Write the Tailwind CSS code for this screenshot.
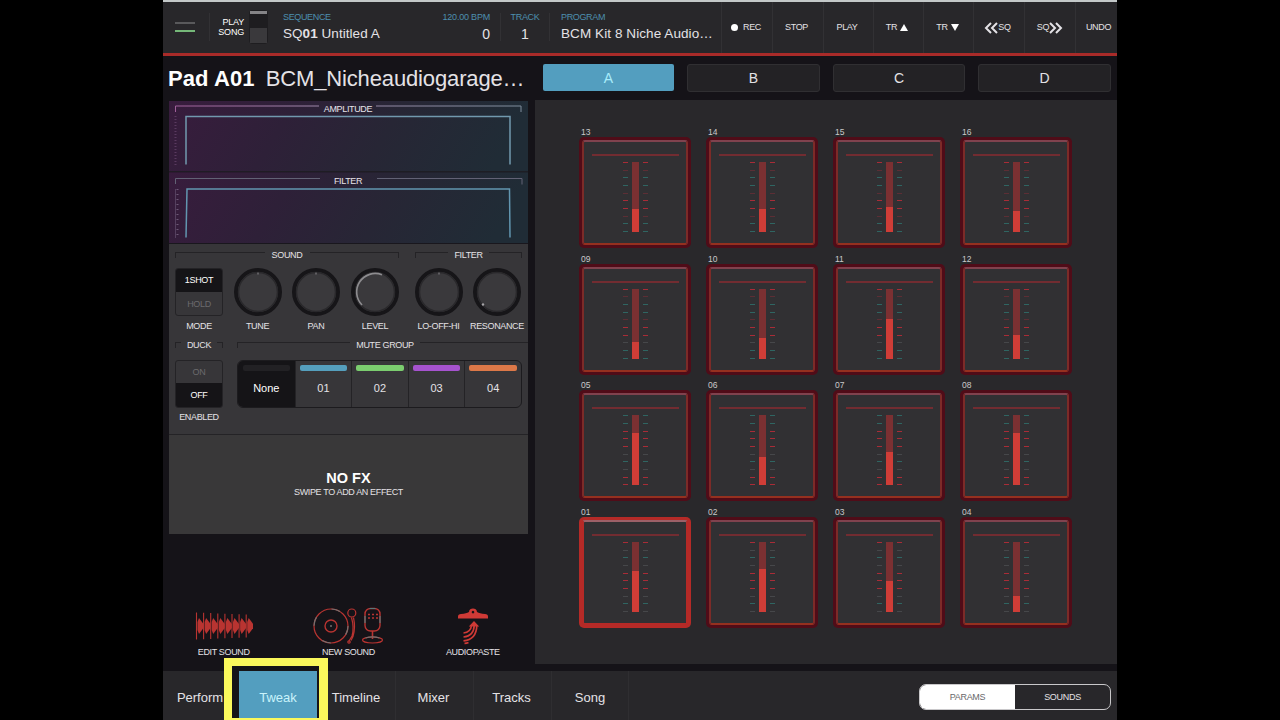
<!DOCTYPE html>
<html lang="en">
<head>
    <meta charset="UTF-8">
    <meta name="viewport" content="width=device-width, initial-scale=1.0">
    <title>Pad Tweak</title>
    <script src="https://cdn.jsdelivr.net/npm/@tailwindcss/browser@4"></script>
</head>
<body class="bg-black overflow-hidden">
<div class="relative ml-[163px] w-[954px] h-[720px] flex flex-col overflow-hidden bg-[#151318] text-[#e4e2e6] font-['Liberation_Sans',Arial,sans-serif] text-[9px] leading-none tracking-[-0.35px] whitespace-nowrap">

    <!-- Transport bar -->
    <header class="h-[56px] shrink-0 flex bg-[#28272a] border-t-2 border-t-[#c3c8c8] border-b-3 border-b-[#a92b29]">
        <div class="w-[46px] flex flex-col justify-center items-center gap-[6px] pr-[2px] pb-[2px]">
            <div class="w-5 h-[2px] bg-[#59595b]"></div>
            <div class="w-5 h-[2px] bg-[#75b778]"></div>
        </div>
        <div class="w-[65px] flex items-center justify-end gap-[5px] pr-[6px] pb-[2px] relative">
            <div class="text-right leading-[10px] tracking-[-0.2px] font-medium text-white">PLAY<br>SONG</div>
            <div class="w-[19px] h-[34px] p-px bg-[#1e1d20] rounded-sm flex flex-col justify-between">
                <div class="h-[3px] bg-[#858487]"></div>
                <div class="h-[15px] bg-[#3a393c]"></div>
            </div>
            <div class="absolute left-0 top-[11px] h-7 w-px bg-[#323134]"></div>
        </div>
        <div class="w-[226px] flex justify-between pt-[11px] pl-[9px] pr-[10px]">
            <div>
                <div class="text-[#4d8fae]">SEQUENCE</div>
                <div class="mt-[5px] text-[13.5px] tracking-[0.05px]">SQ<b>01</b> Untitled A</div>
            </div>
            <div class="text-right">
                <div class="text-[#4d8fae] tracking-[-0.2px]">120.00 BPM</div>
                <div class="mt-[5px] text-[14px] tracking-normal">0</div>
            </div>
        </div>
        <div class="w-[50px] text-center pt-[11px] relative">
            <div class="text-[#4d8fae]">TRACK</div>
            <div class="mt-[5px] text-[14px] tracking-normal">1</div>
            <div class="absolute left-0 top-[11px] h-7 w-px bg-[#323134]"></div>
            <div class="absolute right-0 top-[11px] h-7 w-px bg-[#323134]"></div>
        </div>
        <div class="w-[171px] pt-[11px] pl-[11px]">
            <div class="text-[#4d8fae]">PROGRAM</div>
            <div class="mt-[5px] text-[13.5px] tracking-[0.08px]">BCM Kit 8 Niche Audio…</div>
        </div>
        <div class="w-[51px] border-l border-[#323134] flex items-center justify-center gap-[5px] pr-[2px]"><span class="size-[7px] rounded-full bg-white"></span>REC</div>
        <div class="w-[51px] border-l border-[#323134] flex items-center justify-center pr-[3px]">STOP</div>
        <div class="w-[50px] border-l border-[#323134] flex items-center justify-center pr-[3px]">PLAY</div>
        <div class="w-[50px] border-l border-[#323134] flex items-center justify-center gap-[3px] pr-[3px]">TR
            <svg class="w-2 h-[7px]" viewBox="0 0 8 7" fill="#fff"><path d="M4 0L8 7H0z"/></svg>
        </div>
        <div class="w-[50px] border-l border-[#323134] flex items-center justify-center gap-[3px] pr-[2px]">TR
            <svg class="w-2 h-[7px]" viewBox="0 0 8 7" fill="#fff"><path d="M0 0h8L4 7z"/></svg>
        </div>
        <div class="w-[51px] border-l border-[#323134] flex items-center justify-center pr-[3px]">
            <svg class="w-[14px] h-3" viewBox="0 0 14 12" fill="none" stroke="#e4e2e6" stroke-width="2"><path d="M7 1L2 6l5 5M13 1L8 6l5 5"/></svg>SQ
        </div>
        <div class="w-[51px] border-l border-[#323134] flex items-center justify-center">SQ
            <svg class="w-[14px] h-3" viewBox="0 0 14 12" fill="none" stroke="#e4e2e6" stroke-width="2"><path d="M1 1l5 5-5 5M7 1l5 5-5 5"/></svg>
        </div>
        <div class="flex-1 border-l border-[#323134] flex items-center justify-center pl-[4px]">UNDO</div>
    </header>

    <!-- Pad name and banks -->
    <div class="h-[44px] shrink-0 flex items-center pl-[5px] tracking-normal">
        <div class="w-[375px] flex gap-[11px] pt-[2px] text-[22px]">
            <b class="text-white tracking-[0.1px]">Pad A01</b>
            <span class="tracking-[-0.14px]">BCM_Nicheaudiogarage…</span>
        </div>
        <div class="flex gap-[13px] text-[14px]">
            <div class="w-[131px] h-[27px] rounded-xs flex items-center justify-center bg-[#539ebf] text-[#a8ecfa]">A</div>
            <div class="w-[133px] h-[28px] rounded-[3px] flex items-center justify-center bg-[#232225] border border-[#302f32]">B</div>
            <div class="w-[132px] h-[28px] rounded-[3px] flex items-center justify-center bg-[#232225] border border-[#302f32]">C</div>
            <div class="w-[133px] h-[28px] rounded-[3px] flex items-center justify-center bg-[#232225] border border-[#302f32]">D</div>
        </div>
    </div>

    <main class="h-[564px] shrink-0 flex">
        <section class="w-[372px] flex flex-col">
            <div class="ml-[6px] w-[359px] h-[433px] mt-px bg-[#373639] flex flex-col">

                <!-- Envelopes -->
                <svg class="w-[359px] h-[143px] block shrink-0" viewBox="169 101 359 143">
                    <defs>
                        <linearGradient id="env" x1="0" y1="0" x2="1" y2="0.12">
                            <stop offset="0" stop-color="#381c3d"/>
                            <stop offset="0.35" stop-color="#2e2038"/>
                            <stop offset="0.65" stop-color="#272635"/>
                            <stop offset="1" stop-color="#202c36"/>
                        </linearGradient>
                        <linearGradient id="rule" gradientUnits="userSpaceOnUse" x1="175" y1="0" x2="521" y2="0">
                            <stop offset="0" stop-color="#a0609a"/>
                            <stop offset="0.4" stop-color="#9d86a8"/>
                            <stop offset="1" stop-color="#7e8d9c"/>
                        </linearGradient>
                    </defs>
                    <rect x="169" y="101" width="359" height="70.5" fill="url(#env)"/>
                    <rect x="169" y="172" width="359" height="71" fill="url(#env)"/>
                    <path d="M169 171.8h359M169 243.5h359" stroke="#19171d"/>
                    <path d="M175.5 112v-6H319M376 106h145v6" fill="none" stroke="url(#rule)"/>
                    <path d="M175.5 184v-5.500H320M377 178.500h145v6" fill="none" stroke="#626275"/>
                    <path d="M175.500 116v50" stroke="#5a3a60" stroke-width="2" stroke-dasharray="1 2"/>
                    <path d="M175.500 189v49" stroke="#55405f"/>
                    <path d="M177.500 189v49" stroke="#6d5876" stroke-width="2" stroke-dasharray="1 4"/>
                    <path d="M186 164.500v-48h324v48" fill="none" stroke="#7199ae" stroke-width="1.500"/>
                    <path d="M186 237.500l1-48.500h322.500l.5 48.500" fill="none" stroke="#6296b0" stroke-width="1.500"/>
                    <g fill="#e8e4ea" font-size="9" text-anchor="middle" letter-spacing="-0.35">
                        <text x="348" y="111.500">AMPLITUDE</text>
                        <text x="348" y="184">FILTER</text>
                    </g>
                </svg>

                <!-- Sound controls -->
                <div class="h-[95px] shrink-0 pt-[5px] pl-[6px]">
                    <div class="flex gap-4 h-3 items-center">
                        <div class="w-[224px] flex items-center">
                            <div class="flex-1 h-[6px] border-t border-l border-[#242326]"></div>
                            <span class="w-[45px] text-center">SOUND</span>
                            <div class="flex-1 h-[6px] border-t border-r border-[#242326]"></div>
                        </div>
                        <div class="w-[107px] flex items-center">
                            <div class="flex-1 h-[6px] border-t border-l border-[#242326]"></div>
                            <span class="w-[41px] text-center">FILTER</span>
                            <div class="flex-1 h-[6px] border-t border-r border-[#242326]"></div>
                        </div>
                    </div>
                    <div class="mt-[7px] flex">
                        <div class="w-12 flex flex-col items-center gap-[6px]">
                            <div class="w-12 h-12 flex flex-col border border-[#242326] rounded-[3px] overflow-hidden text-center">
                                <div class="h-6 leading-[23px] bg-[#151417] text-white">1SHOT</div>
                                <div class="flex-1 leading-[24px] text-[#6b6a6d]">HOLD</div>
                            </div>
                            MODE
                        </div>
                        <div class="ml-[10.5px] w-12 flex flex-col items-center gap-[6px]">
                            <svg class="size-12" viewBox="-24 -24 48 48"><circle r="22" fill="#3a393c" stroke="#161518" stroke-width="4"/><circle r="19.500" fill="none" stroke="#29282b" stroke-width="1.500"/><path d="M0-19.500v2" stroke="#8a898c"/></svg>
                            TUNE
                        </div>
                        <div class="ml-[10.5px] w-12 flex flex-col items-center gap-[6px]">
                            <svg class="size-12" viewBox="-24 -24 48 48"><circle r="22" fill="#3a393c" stroke="#161518" stroke-width="4"/><circle r="19.500" fill="none" stroke="#29282b" stroke-width="1.500"/><path d="M0-19.500v2" stroke="#8a898c"/></svg>
                            PAN
                        </div>
                        <div class="ml-[11px] w-12 flex flex-col items-center gap-[6px]">
                            <svg class="size-12" viewBox="-24 -24 48 48"><circle r="22" fill="#3a393c" stroke="#161518" stroke-width="4"/><circle r="19.500" fill="none" stroke="#29282b" stroke-width="1.500"/><path d="M-13 13A18.500 18.500 0 0 1 7-17.200" fill="none" stroke="#8d8c8f" stroke-width="1.700"/></svg>
                            LEVEL
                        </div>
                        <div class="ml-[15.5px] w-12 flex flex-col items-center gap-[6px]">
                            <svg class="size-12" viewBox="-24 -24 48 48"><circle r="22" fill="#3a393c" stroke="#161518" stroke-width="4"/><circle r="19.500" fill="none" stroke="#29282b" stroke-width="1.500"/><path d="M0-19.500v2" stroke="#8a898c"/></svg>
                            LO-OFF-HI
                        </div>
                        <div class="ml-[10.5px] w-12 flex flex-col items-center gap-[6px]">
                            <svg class="size-12" viewBox="-24 -24 48 48"><circle r="22" fill="#3a393c" stroke="#161518" stroke-width="4"/><circle r="19.500" fill="none" stroke="#29282b" stroke-width="1.500"/><circle cx="-14" cy="12.500" r="1.200" fill="#a5a4a7"/></svg>
                            RESONANCE
                        </div>
                    </div>
                </div>

                <!-- Duck and mute group -->
                <div class="h-[96px] shrink-0 pl-[6px] flex gap-[14px] border-b border-[#242326]">
                    <div class="w-12 flex flex-col items-center">
                        <div class="w-12 h-3 flex items-center">
                            <div class="w-[6px] h-[6px] border-t border-l border-[#242326]"></div>
                            <span class="flex-1 text-center">DUCK</span>
                            <div class="w-[6px] h-[6px] border-t border-r border-[#242326]"></div>
                        </div>
                        <div class="mt-[9px] mb-[5px] w-12 h-12 flex flex-col border border-[#242326] rounded-[3px] overflow-hidden text-center">
                            <div class="h-[23px] leading-[22px] text-[#6b6a6d]">ON</div>
                            <div class="flex-1 leading-[24px] bg-[#151417] text-white">OFF</div>
                        </div>
                        ENABLED
                    </div>
                    <div class="flex-1">
                        <div class="h-3 flex items-center">
                            <div class="w-[113px] h-[6px] border-t border-l border-[#242326]"></div>
                            <span class="w-[70px] text-center">MUTE GROUP</span>
                            <div class="flex-1 h-[6px] border-t border-[#242326]"></div>
                        </div>
                        <div class="mt-[9px] w-[285px] h-12 grid grid-cols-5 rounded-[6px] border border-[#1c1b1e] overflow-hidden text-[11px] tracking-normal text-center">
                            <div class="bg-[#151417] pt-[4px] px-[5px] text-white"><div class="h-[6px] mb-[12px] rounded-xs bg-[#222124]"></div>None</div>
                            <div class="pt-[4px] px-[4px] border-l border-[#242326]"><div class="h-[6px] mb-[12px] rounded-xs bg-[#559fbd]"></div>01</div>
                            <div class="pt-[4px] px-[4px] border-l border-[#242326]"><div class="h-[6px] mb-[12px] rounded-xs bg-[#7bcd6f]"></div>02</div>
                            <div class="pt-[4px] px-[4px] border-l border-[#242326]"><div class="h-[6px] mb-[12px] rounded-xs bg-[#a653cf]"></div>03</div>
                            <div class="pt-[4px] px-[4px] border-l border-[#242326]"><div class="h-[6px] mb-[12px] rounded-xs bg-[#dc7848]"></div>04</div>
                        </div>
                    </div>
                </div>

                <!-- Effect slot -->
                <div class="flex-1 flex flex-col items-center pt-[36px] bg-[#393839]">
                    <div class="text-[14.5px] font-bold text-white tracking-normal">NO FX</div>
                    <div class="mt-[2px] tracking-[-0.35px]">SWIPE TO ADD AN EFFECT</div>
                </div>
            </div>

            <!-- Sound actions -->
            <div class="flex-1 grid grid-cols-3 -ml-[1px] pt-[72px] text-center">
                <div class="flex flex-col items-center gap-[2px] pr-px">
                    <svg class="w-[58px] h-10" viewBox="195 606 58 40" stroke="#b93431" fill="none">
                        <g id="saws"></g>
                    </svg>
                    EDIT SOUND
                </div>
                <div class="flex flex-col items-center gap-[2px]">
                    <svg class="w-[72px] h-10" viewBox="312.500 606 72 40" fill="none" stroke="#b93431" stroke-width="1.200">
                        <circle cx="331.500" cy="626" r="17"/>
                        <circle cx="331.500" cy="626" r="17" stroke="#75706f" stroke-dasharray="9 17.700"/>
                        <circle cx="331.500" cy="626" r="6" stroke-width="1.400"/>
                        <circle cx="331.500" cy="626" r="1" fill="#75706f" stroke="none"/>
                        <circle cx="352.300" cy="613" r="4"/>
                        <path d="M352 617.500c2 7 2 13 .5 18.500l-3 5M354 617.500c1.500 7 1.500 13-.5 19l-2 4"/>
                        <circle cx="349.500" cy="642" r="1.200"/>
                        <rect x="365.500" y="608.500" width="15" height="22.500" rx="5.500" stroke-width="1.400"/>
                        <path d="M370 608.500h6M365.500 616v7M380.500 616v7" stroke="#56797a"/>
                        <path d="M368.500 614.500h10M368.500 618h10" stroke-width="1.500" stroke-dasharray="2 2"/>
                        <path d="M373 631v8" stroke-width="1.600"/>
                        <ellipse cx="373" cy="640" rx="10" ry="3"/>
                        <path d="M366 638c4-1.300 10-1.300 14 0" stroke="#75706f"/>
                    </svg>
                    NEW SOUND
                </div>
                <div class="flex flex-col items-center gap-[2px]">
                    <svg class="w-8 h-10" viewBox="457 606 32 40" fill="#cf3a36">
                        <path fill-rule="evenodd" d="M458 618.500v-2c0-1.600 1-2.200 3-2.500 4-.3 6-.8 8-2 .2-2.600 2-3.500 4-3.500s3.800.9 4 3.500c2 1.200 4 1.700 8 2 2 .3 3 .9 3 2.500v2zM473 610.800a1.300 1.300 0 1 0 .01 0z"/>
                        <path d="M474 621l5.200 5.500h-10.400z"/>
                        <g fill="none" stroke="#cf3a36" stroke-width="1.700">
                            <path d="M463.500 633c4.800-.5 7.500-3 8-7.500M463.500 637c7-.7 10.500-4.500 10.700-11.500M463.500 640.800c9-.7 13-5.500 13.300-15.300M464.500 643.300c2 0 3-.3 4-.8"/>
                        </g>
                    </svg>
                    AUDIOPASTE
                </div>
            </div>
        </section>

        <!-- Pads -->
        <section class="w-[582px] pt-[26px] pl-[44px] bg-[#29282b]">
            <div id="pads" class="grid grid-cols-4 gap-x-[15px] w-[493px] tracking-normal"></div>
        </section>
    </main>

    <!-- Tabs -->
    <nav class="mt-[7px] h-[49px] flex bg-[#28272a] text-[13px] tracking-normal">
        <div class="w-[76px] pr-[2px] flex items-center justify-center pt-[3px]">Perform</div>
        <div class="w-[78px] flex items-center justify-center pt-[3px] bg-[#539ebf] text-[#c9f3fb]">Tweak</div>
        <div class="w-[78px] flex items-center justify-center pt-[3px]">Timeline</div>
        <div class="w-[78px] flex items-center justify-center pt-[3px] pr-[2px] border-l border-[#2f2e31]">Mixer</div>
        <div class="w-[78px] flex items-center justify-center pt-[3px] pr-[2px] border-l border-[#2f2e31]">Tracks</div>
        <div class="w-[78px] flex items-center justify-center pt-[3px] border-x border-[#2f2e31]">Song</div>
        <div class="flex-1 flex justify-end items-center pr-[6px] pt-[3px] text-[9px] tracking-[-0.3px]">
            <div class="w-[192px] h-[26px] flex border border-[#c9c8ca] rounded-[7px] overflow-hidden">
                <div class="w-[95px] flex items-center justify-center bg-white text-[#68676a]">PARAMS</div>
                <div class="flex-1 flex items-center justify-center">SOUNDS</div>
            </div>
        </div>
    </nav>

    <!-- Highlight round the Tweak tab -->
    <div class="absolute left-[61px] top-[658px] w-[104px] h-[70px] border-8 border-[#fbf95c] border-r-9">
        <div class="absolute left-0 top-0 w-[87px] h-[54px] border-t-5 border-l-7 border-r-2 border-[#161518]"></div>
        <div class="absolute left-0 bottom-0 w-full h-[2px] bg-[#fbf95c]"></div>
    </div>
</div>

<script>
    // Pads from the top row down, with the level of each in pixels
    const pads = [
        ['13', 23], ['14', 23], ['15', 25], ['16', 21],
        ['09', 17], ['10', 21], ['11', 40], ['12', 24],
        ['05', 52], ['06', 28], ['07', 33], ['08', 52],
        ['01', 41], ['02', 43], ['03', 31], ['04', 16]
    ];
    const red = '#a82c37', teal = '#2f6562', dim = '#46474a', dimRed = '#5c2e35';
    // Scale colours beside the meter, one list for each row of pads
    const ticks = [
        [red, dimRed, teal, teal, dimRed, red, red, dimRed, teal, teal],
        [red, dimRed, teal, teal, dimRed, red, red, dim, teal, teal],
        [teal, teal, red, red, red, dim, teal, dim, red, red],
        [red, dim, teal, dim, red, red, red, dim, teal, dim]
    ];

    function tickColumn(row) {
        return '<div class="w-[5px] h-[70px] flex flex-col justify-between">' +
            ticks[row].map(c => `<div class="h-px" style="background:${c}"></div>`).join('') + '</div>';
    }

    document.getElementById('pads').innerHTML = pads.map(([name, level], i) => {
        const row = Math.floor(i / 4);
        const selected = name === '01';
        return `
        <div class="w-28 h-[126.7px]">
            <div class="h-[11px] pl-[2px] text-[8.5px] leading-[12px] text-[#c9c8ca]">${name}</div>
            <div class="w-28 h-[111px] p-[3px] rounded-[5px] ${selected ? 'bg-[#b52a27]' : 'bg-[#500c18]'}">
                <div class="h-[105px] rounded-[3px] border-2 ${selected ? 'border-[#b52a27] border-t-[#9c6068]' : 'border-[#7c2b28] border-t-[#80424e] border-b-[#95301f]'} bg-[#313033] flex flex-col items-center">
                    <div class="mt-[12px] w-[87px] h-[2px] bg-[#722c31]"></div>
                    <div class="mt-[6px] flex gap-1">
                        ${tickColumn(row)}
                        <div class="w-[7px] h-[70px] flex items-end bg-[#7b3032]"><div class="w-full bg-[#cf3d37]" style="height:${level}px"></div></div>
                        ${tickColumn(row)}
                    </div>
                </div>
            </div>
        </div>`;
    }).join('');

    // Repeated decaying hits of the waveform icon
    let saws = '';
    for (let i = 0; i < 8; i++) {
        const x = 196.5 + i * 7.1;
        const top = 13.5 - i * 0.3;
        saws += `<path stroke-width="1.1" d="M${x} ${626 - top}v${top * 2}"/>`;
        saws += `<path fill="#b93431" stroke="none" d="M${x + 1} 622l1.500-4 4.500 6v4l-4.500 6-1.500-4z"/>`;
    }
    document.getElementById('saws').innerHTML = saws;
</script>
</body>
</html>
